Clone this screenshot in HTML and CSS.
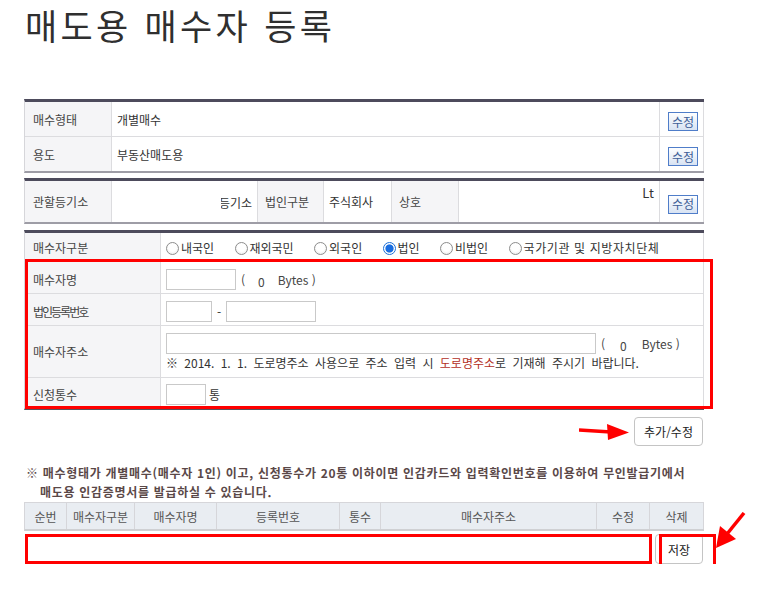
FILE: index.html
```html
<!DOCTYPE html>
<html lang="ko">
<head>
<meta charset="utf-8">
<title>매도용 매수자 등록</title>
<link rel="stylesheet" href="styles.css">
</head>
<body>
<div class="page">
  <h1 class="title">매도용 매수자 등록</h1>

  <table class="grid t1">
    <colgroup><col class="w87"><col class="w548"><col class="w44"></colgroup>
    <tr><th>매수형태</th><td>개별매수</td><td class="btn-cell"><button class="btn-edit" type="button">수정</button></td></tr>
    <tr><th>용도</th><td>부동산매도용</td><td class="btn-cell"><button class="btn-edit" type="button">수정</button></td></tr>
  </table>

  <table class="grid t2">
    <colgroup><col class="w87"><col class="w146"><col class="w66"><col class="w68"><col class="w67"><col class="w201"><col class="w44"></colgroup>
    <tr>
      <th>관할등기소</th>
      <td class="office"><span class="clip">중부등기소</span></td>
      <th class="sub">법인구분</th>
      <td>주식회사</td>
      <th class="sub">상호</th>
      <td class="corp"><div class="lt">Lt</div></td>
      <td class="btn-cell"><button class="btn-edit" type="button">수정</button></td>
    </tr>
  </table>

  <div class="t3-wrap">
    <table class="grid t3">
      <colgroup><col class="w136"><col class="w543"></colgroup>
      <tr class="r-kind">
        <th>매수자구분</th>
        <td class="opts">
          <label class="opt"><input class="radio" type="radio" name="kind">내국인</label>
          <label class="opt"><input class="radio" type="radio" name="kind">재외국민</label>
          <label class="opt"><input class="radio" type="radio" name="kind">외국인</label>
          <label class="opt"><input class="radio" type="radio" name="kind" checked>법인</label>
          <label class="opt"><input class="radio" type="radio" name="kind">비법인</label>
          <label class="opt"><input class="radio" type="radio" name="kind">국가기관 및 지방자치단체</label>
        </td>
      </tr>
      <tr class="r-name">
        <th>매수자명</th>
        <td><input class="in in-name" type="text"><span class="bytes">( <span class="cnt">0</span> Bytes )</span></td>
      </tr>
      <tr class="r-reg">
        <th><span class="tight">법인등록번호</span></th>
        <td><input class="in in-reg1" type="text"><span class="dash">-</span><input class="in in-reg2" type="text"></td>
      </tr>
      <tr class="r-addr">
        <th>매수자주소</th>
        <td>
          <div class="addr-line"><input class="in in-addr" type="text"><span class="bytes">( <span class="cnt cnt-wide">0</span> Bytes )</span></div>
          <p class="addr-note">※ 2014. 1. 1. 도로명주소 사용으로 주소 입력 시 <em class="road">도로명주소</em>로 기재해 주시기 바랍니다.</p>
        </td>
      </tr>
      <tr class="r-cnt">
        <th>신청통수</th>
        <td><input class="in in-count" type="text"><span class="unit">통</span></td>
      </tr>
    </table>
    <div class="mark mark-form"></div>
  </div>

  <div class="actions">
    <svg class="arrow arrow-add" width="52" height="18" viewBox="0 0 52 18" aria-hidden="true">
      <line x1="0" y1="6" x2="32" y2="8" stroke="#ff0000" stroke-width="3.5"/>
      <polygon points="28,0 50,8.5 29,16" fill="#ff0000"/>
    </svg>
    <button class="btn-gray btn-add" type="button">추가/수정</button>
  </div>

  <p class="notice">※ 매수형태가 개별매수(매수자 1인) 이고, 신청통수가 20통 이하이면 인감카드와 입력확인번호를 이용하여 무인발급기에서<br>매도용 인감증명서를 발급하실 수 있습니다.</p>

  <table class="list">
    <colgroup><col class="w42"><col class="w68"><col class="w82"><col class="w123"><col class="w41"><col class="w216"><col class="w53"><col class="w54"></colgroup>
    <tr><th>순번</th><th>매수자구분</th><th>매수자명</th><th>등록번호</th><th>통수</th><th>매수자주소</th><th>수정</th><th>삭제</th></tr>
  </table>

  <div class="save-row">
    <div class="mark mark-list"></div>
    <button class="btn-gray btn-save" type="button">저장</button>
    <div class="mark mark-save"></div>
    <svg class="arrow arrow-save" width="34" height="40" viewBox="0 0 34 40" aria-hidden="true">
      <line x1="30" y1="1" x2="13" y2="22" stroke="#ff0000" stroke-width="3.5"/>
      <polygon points="2,36 6,14 22,27" fill="#ff0000"/>
    </svg>
  </div>
</div>
</body>
</html>
```
FILE: styles.css
```css
* { box-sizing: border-box; }

html, body {
  margin: 0;
  padding: 0;
  background: #ffffff;
}

body {
  font-family: "Noto Sans CJK KR", "Noto Sans", sans-serif;
  font-size: 12px;
  color: #333333;
}

.page {
  padding-left: 24px;
  width: 740px;
}

.title {
  margin: 0 0 49px 1px;
  font-size: 35px;
  line-height: 50px;
  font-weight: 400;
  letter-spacing: 3.3px;
  color: #2f2f2f;
  white-space: nowrap;
}

/* ---------- form tables ---------- */
.grid {
  width: 680px;
  table-layout: fixed;
  border-collapse: separate;
  border-spacing: 0;
  border-left: 1px solid #d6d6da;
  border-top: 3px solid #4d4b5c;
  border-bottom: 2px solid #9e9da6;
}

.grid th,
.grid td {
  border-right: 1px solid #dcdcdf;
  border-bottom: 1px solid #dcdcdf;
  padding: 0 0 0 5px;
  text-align: left;
  font-weight: 400;
  vertical-align: middle;
  white-space: nowrap;
  overflow: hidden;
}

.grid tr:last-child > th,
.grid tr:last-child > td {
  border-bottom: none;
}

.grid th {
  background: #f5f5f7;
  color: #444444;
  padding-left: 8px;
}

.grid th.sub { padding-left: 7px; }

.w87 { width: 87px; }
.w548 { width: 548px; }
.w44 { width: 44px; }
.w146 { width: 146px; }
.w66 { width: 66px; }
.w68 { width: 68px; }
.w67 { width: 67px; }
.w201 { width: 201px; }
.w136 { width: 136px; }
.w543 { width: 543px; }
.w42 { width: 42px; }
.w82 { width: 82px; }
.w123 { width: 123px; }
.w41 { width: 41px; }
.w216 { width: 216px; }
.w53 { width: 53px; }
.w54 { width: 54px; }

.t1 tr > * { height: 35px; }
.t1 tr:last-child > * { height: 34px; }

.t2 { margin-top: 5px; }
.t2 tr > * { height: 41px; }

.btn-cell {
  padding: 5px 0 0 8px !important;
}

.btn-edit {
  display: block;
  width: 30px;
  height: 19px;
  padding: 0;
  border: 1px solid #4f7dc9;
  background: linear-gradient(#fdfeff, #d8e3f3);
  color: #3d5d97;
  font-family: "Noto Sans CJK KR", sans-serif;
  font-size: 12px;
  line-height: 16px;
}

.office {
  text-align: right !important;
  padding-right: 5px !important;
}

.clip {
  display: inline-block;
  width: 31px;
  overflow: hidden;
  direction: rtl;
  white-space: nowrap;
  vertical-align: middle;
}

.corp {
  vertical-align: top !important;
  padding: 4px 5px 0 0 !important;
}

.lt {
  text-align: right;
  font-size: 13px;
  line-height: 16px;
  color: #333333;
}

/* ---------- buyer table ---------- */
.t3-wrap {
  position: relative;
  width: 680px;
  margin-top: 6px;
}

.t3 {
  border-bottom: 2px solid #55545f;
}

.t3 td { padding-left: 5px; }

.r-kind > * { height: 27px; padding-top: 3px !important; }
.r-name > * { height: 34px; padding-top: 5px !important; }
.r-reg > * { height: 32px; padding-top: 3px !important; }
.r-addr > * { height: 52px; }
.r-cnt > * { height: 30px; padding-top: 2px !important; }

.opt {
  display: inline-block;
  margin-right: 17px;
  color: #333333;
}

.opt:last-child { letter-spacing: 0.6px; }

.radio {
  -webkit-appearance: none;
  appearance: none;
  width: 13px;
  height: 13px;
  margin: 0 2px 0 0;
  border: 1px solid #8d8d8d;
  border-radius: 50%;
  background: radial-gradient(circle at 50% 40%, #ffffff 45%, #e4e4e4 100%);
  vertical-align: -2px;
}

.radio:checked {
  border-color: #1c6fd6;
  background: radial-gradient(circle, #1a6de0 0, #1a6de0 3.6px, #ffffff 4.6px);
}

.in {
  height: 21px;
  margin: 0;
  padding: 0 2px;
  border: 1px solid #c9c9c9;
  background: #ffffff;
  vertical-align: middle;
  font: 12px "Noto Sans CJK KR", sans-serif;
}

.in-name { width: 70px; }
.in-reg1 { width: 46px; }
.in-reg2 { width: 90px; }
.in-addr { width: 430px; }
.in-count { width: 40px; }

.bytes {
  margin-left: 5px;
  color: #444444;
  vertical-align: middle;
}

.cnt {
  display: inline-block;
  width: 26px;
  text-align: center;
  position: relative;
  top: 2px;
}

.cnt-wide { width: 30px; }

.dash {
  display: inline-block;
  width: 14px;
  text-align: center;
  vertical-align: middle;
}

.unit {
  margin-left: 3px;
  vertical-align: middle;
}

.addr-line {
  height: 21px;
  margin-top: 1px;
  white-space: nowrap;
}

.addr-line .in { vertical-align: top; }
.addr-line .bytes { vertical-align: top; line-height: 21px; }

.addr-note {
  margin: 1px 0 0 0;
  line-height: 16px;
  color: #333333;
  word-spacing: 3px;
}

.road {
  font-style: normal;
  color: #b3301e;
}

.tight { letter-spacing: -2px; }

/* ---------- annotation marks ---------- */
.mark {
  border: 3px solid #ff0000;
}

.mark-form {
  position: absolute;
  left: 1px;
  top: 29px;
  width: 688px;
  height: 150px;
}

/* ---------- actions ---------- */
.actions {
  position: relative;
  width: 680px;
  margin-top: 7px;
  display: flex;
  justify-content: flex-end;
}

.btn-gray {
  padding: 0;
  border: 1px solid #c4c4c4;
  border-radius: 4px;
  background: #ffffff;
  color: #222222;
  font-family: "Noto Sans CJK KR", sans-serif;
  font-size: 12px;
}

.btn-add {
  width: 69px;
  height: 29px;
  margin-right: 1px;
}

.arrow { position: absolute; }

.arrow-add {
  left: 555px;
  top: 7px;
}

.notice {
  margin: 17px 0 0 0;
  width: 710px;
  padding-left: 16px;
  text-indent: -14px;
  font-weight: 700;
  line-height: 19px;
  letter-spacing: 0.7px;
  white-space: nowrap;
  color: #5a4848;
}

/* ---------- list ---------- */
.list {
  margin-top: 1px;
  width: 680px;
  table-layout: fixed;
  border-collapse: separate;
  border-spacing: 0;
  border-left: 1px solid #d6d6da;
  border-top: 1px solid #d6d6da;
  border-bottom: 2px solid #cfd0d3;
}

.list th {
  height: 26px;
  padding: 0;
  border-right: 1px solid #d6d6da;
  background: #e9edf2;
  color: #555555;
  font-weight: 400;
  text-align: center;
  white-space: nowrap;
}

.save-row {
  position: relative;
  width: 720px;
  margin-top: 3px;
  display: flex;
}

.mark-list {
  margin-left: 1px;
  width: 627px;
  height: 30px;
}

.btn-save {
  margin-left: 3px;
  width: 48px;
  height: 30px;
}

.mark-save {
  position: absolute;
  left: 635px;
  top: 0;
  width: 57px;
  height: 33px;
}

.arrow-save {
  left: 690px;
  top: -22px;
}
```
